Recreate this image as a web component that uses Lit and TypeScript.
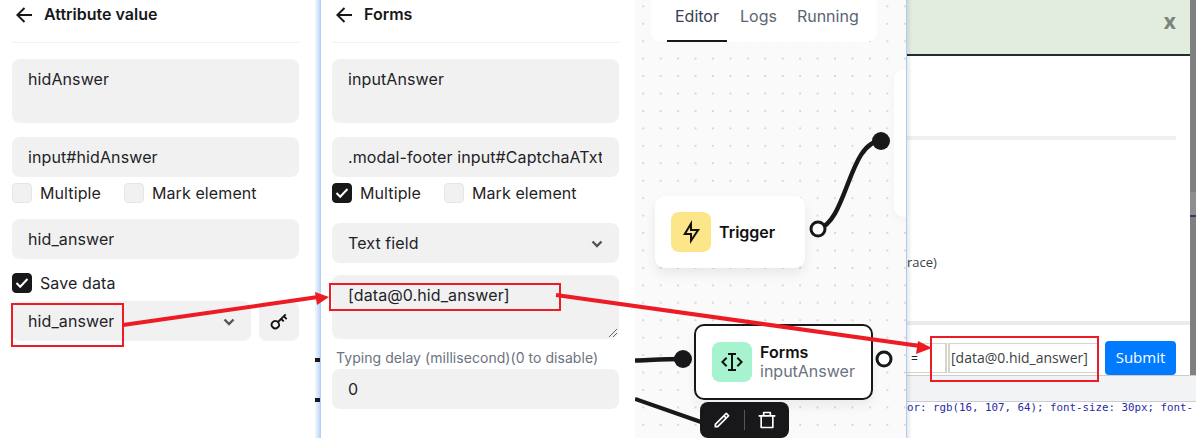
import { LitElement, html, css, svg } from 'lit';
import { customElement } from 'lit/decorators.js';

const ICONS = {
	back: 'M7.828 11H20v2H7.828l5.364 5.364-1.414 1.414L4 12l7.778-7.778 1.414 1.414z',
	key: 'M10.758 11.828l7.849-7.849 1.414 1.414-1.414 1.415 2.474 2.474-1.414 1.415-2.475-2.475-1.414 1.414 2.121 2.121-1.414 1.415-2.121-2.122-2.192 2.192a5.002 5.002 0 0 1-7.708 6.294 5 5 0 0 1 6.294-7.708zm-.637 6.293A3 3 0 1 0 5.88 13.88a3 3 0 0 0 4.242 4.242z',
	bolt: 'M13 9h8L11 24v-9H4l9-15v9zm-2 2V7.22L7.532 13H13v4.394L17.263 11H11z',
	cursor: 'M8 21v-2h3V5H8V3h8v2h-3v14h3v2H8zM18.05 7.05L23 12l-4.95 4.95-1.414-1.414L20.172 12l-3.536-3.536L18.05 7.05zm-12.1 0l1.414 1.414L3.828 12l3.536 3.536L5.95 16.95 1 12l4.95-4.95z',
	pencil: 'M15.728 9.686l-1.414-1.414L5 17.586V19h1.414l9.314-9.314zm1.414-1.414l1.414-1.414-1.414-1.414-1.414 1.414 1.414 1.414zM7.242 21H3v-4.243L16.435 3.322a1 1 0 0 1 1.414 0l2.829 2.829a1 1 0 0 1 0 1.414L7.243 21z',
	trash: 'M7 6V3a1 1 0 0 1 1-1h8a1 1 0 0 1 1 1v3h5v2h-2v13a1 1 0 0 1-1 1H5a1 1 0 0 1-1-1V8H2V6h5zm2-2v2h6V4H9zM6 8v12h12V8H6z',
};

const icon = (d: string, size = 24, color = 'currentColor') => html`
	<svg width=${size} height=${size} viewBox="0 0 24 24" fill=${color} fill-rule="evenodd"><path d=${d}></path></svg>
`;

@customElement('app-root')
export class AppRoot extends LitElement {
	static styles = css`
		:host {
			display: block;
			position: relative;
			width: 1196px;
			height: 438px;
			overflow: hidden;
			background: #fff;
			font-family: Inter, 'Liberation Sans', sans-serif;
			color: #1f2328;
		}

		.row {
			display: flex;
			height: 438px;
		}

		/* side panels */
		.panel {
			flex: none;
			box-sizing: border-box;
			padding-left: 12px;
			background: #fff;
			display: flex;
			flex-direction: column;
		}
		.panel.first {
			width: 315px;
		}
		.panel.second {
			width: 314px;
			padding-left: 11px;
		}
		.body {
			width: 287px;
			display: flex;
			flex-direction: column;
		}
		.head {
			height: 43px;
			box-sizing: border-box;
			border-bottom: 1px solid #f1f1f1;
			display: flex;
			align-items: flex-start;
			gap: 8px;
			padding-top: 2px;
			font-size: 16px;
			font-weight: 600;
			line-height: 24px;
			color: #17181a;
		}
		.head svg {
			flex: none;
			margin-top: 1px;
		}

		.field {
			box-sizing: border-box;
			height: 40px;
			padding: 1px 16px 0;
			background: #f1f1f1;
			border-radius: 8px;
			font-size: 16px;
			letter-spacing: 0.1px;
			line-height: 39px;
			white-space: nowrap;
			display: flex;
			align-items: center;
			justify-content: space-between;
		}
		.field > span {
			min-width: 0;
			overflow: hidden;
		}
		.field > span.clip {
			width: 254px;
			flex: none;
		}
		.area {
			position: relative;
			height: 64px;
			align-items: flex-start;
			line-height: 38px;
		}
		.grip {
			position: absolute;
			right: 1px;
			bottom: 1px;
		}
		.checks {
			display: flex;
			align-items: center;
			gap: 23px;
			height: 20px;
			font-size: 16px;
			letter-spacing: 0.1px;
		}
		.check {
			display: flex;
			align-items: center;
			gap: 8px;
		}
		.box {
			box-sizing: border-box;
			width: 20px;
			height: 20px;
			border-radius: 4px;
			background: #f1f1f1;
			border: 1px solid #e6e6e6;
		}
		.box.on {
			background: #18181b;
			border-color: #18181b;
			display: flex;
			align-items: center;
			justify-content: center;
		}
		.split {
			display: flex;
			gap: 8px;
		}
		.split .field:first-child {
			width: 239px;
		}
		.key {
			width: 40px;
			height: 40px;
			background: #f1f1f1;
			border-radius: 8px;
			display: flex;
			align-items: center;
			justify-content: center;
			color: #111;
		}
		.caption {
			margin: 11px 0 3px 4px;
			font-size: 14px;
			letter-spacing: 0.05px;
			line-height: 16px;
			color: #6b7280;
			white-space: nowrap;
		}
		.mt14 {
			margin-top: 14px;
		}
		.mt16 {
			margin-top: 16px;
		}
		.mt20 {
			margin-top: 20px;
		}
		.mt6 {
			margin-top: 6px;
		}
		.mt8 {
			margin-top: 8px;
		}
		.mt12 {
			margin-top: 12px;
		}

		.gutter {
			position: relative;
			flex: none;
			width: 6px;
			background: linear-gradient(90deg, #f3f6fb 0%, #dbe8fa 45%, #a9cdf8 100%);
		}
		.stub {
			position: absolute;
			left: 0;
			width: 5px;
			background: #18181b;
		}

		/* flow canvas */
		.canvas {
			position: relative;
			flex: none;
			width: 272px;
			height: 438px;
			overflow: hidden;
			background-color: #fafafa;
			background-image: radial-gradient(circle, #d8d8d8 1px, transparent 1.3px);
			background-size: 17.45px 17.45px;
			background-position: -0.5px -2.4px;
		}
		.wires {
			position: absolute;
			inset: 0;
		}
		.tabs {
			position: absolute;
			left: 16px;
			top: 0;
			width: 226px;
			height: 42px;
			box-sizing: border-box;
			padding-left: 16px;
			background: #fff;
			border-radius: 0 0 10px 10px;
			display: flex;
			font-size: 16px;
			color: #5b6472;
		}
		.tab {
			height: 42px;
			box-sizing: border-box;
			padding: 4px 8px 0;
			margin-right: 4px;
			line-height: 24px;
		}
		.tab.active {
			color: #374151;
			margin-right: 5px;
			border-bottom: 2px solid #18181b;
		}
		.node {
			position: absolute;
			box-sizing: border-box;
			background: #fff;
			border-radius: 10px;
			display: flex;
			align-items: center;
			gap: 8px;
			color: #111;
		}
		.node.trigger {
			left: 20px;
			top: 196px;
			width: 150px;
			height: 72px;
			padding-left: 16px;
			box-shadow: 0 6px 12px rgba(0, 0, 0, 0.07);
			font-size: 16px;
			font-weight: 600;
		}
		.node.forms {
			left: 59px;
			top: 324px;
			width: 179px;
			height: 76px;
			padding-left: 16px;
			border: 2px solid #18181b;
			box-shadow: 0 6px 12px rgba(0, 0, 0, 0.06);
		}
		.node.stub-card {
			left: 259px;
			top: 70px;
			width: 30px;
			height: 147px;
			box-shadow: 0 4px 10px rgba(0, 0, 0, 0.04);
		}
		.tile {
			flex: none;
			width: 40px;
			height: 40px;
			border-radius: 8px;
			display: flex;
			align-items: center;
			justify-content: center;
		}
		.tile.yellow {
			background: #fde68a;
		}
		.tile.green {
			background: #a7f3d0;
		}
		.names {
			display: flex;
			flex-direction: column;
			font-size: 16px;
			line-height: 19px;
		}
		.names b {
			font-weight: 600;
		}
		.names span {
			color: #6b7280;
		}
		.tools {
			position: absolute;
			left: 65px;
			top: 402px;
			width: 89px;
			height: 36px;
			box-sizing: border-box;
			background: #18181b;
			border-radius: 8px;
			display: flex;
			align-items: center;
			color: #fff;
			padding-left: 12px;
		}
		.tools i {
			width: 1px;
			height: 20px;
			margin: 0 12px;
			background: #55565a;
		}

		/* captured page on the right */
		.page {
			position: relative;
			flex: none;
			height: 438px;
			box-sizing: border-box;
			border-left: 1px solid #a9cdf8;
			margin-left: -1px;
			width: 290px;
			display: flex;
			flex-direction: column;
			font-family: 'Open Sans', 'Liberation Sans', sans-serif;
		}
		.page::before {
			content: '';
			position: absolute;
			left: 0;
			top: 0;
			bottom: 0;
			width: 5px;
			background: linear-gradient(90deg, rgba(0, 0, 0, 0.09), transparent);
		}
		.window {
			flex: none;
			height: 375px;
			display: flex;
		}
		.modal {
			flex: 1;
			display: flex;
			flex-direction: column;
			background: #fff;
		}
		.strip {
			flex: none;
			width: 6px;
			background: linear-gradient(#808080 192px, #8e8e8e 192px, #8e8e8e 215px, #3a3a5c 215px, #3a3a5c 217px, #808080 217px);
		}
		.modal-head {
			height: 56px;
			box-sizing: border-box;
			background: #e2eddf;
			border-bottom: 2px solid #1f2d2d;
			display: flex;
			justify-content: flex-end;
			padding: 7px 14px 0 0;
			font-size: 21px;
			font-weight: 700;
			line-height: 28px;
			color: #7c857b;
		}
		.rule {
			margin: 80px 14px 0 0;
			height: 4px;
			background: #f0f0f0;
		}
		.race {
			margin-top: 112px;
			font-size: 13px;
			line-height: 20px;
			color: #3a3f44;
		}
		.foot {
			margin-top: 49px;
			flex: 1;
			border-top: 4px solid #e9ecef;
			display: flex;
			align-items: flex-end;
			font-size: 14px;
		}
		.eq {
			box-sizing: border-box;
			width: 40px;
			height: 30px;
			margin-bottom: 2px;
			padding-left: 4px;
			border: 2px solid #d6d6c8;
			border-width: 1px 2px 1px 0;
			line-height: 30px;
			font-size: 12px;
		}
		.answer {
			box-sizing: border-box;
			width: 150px;
			height: 30px;
			margin: 0 7px 2px 1px;
			padding-left: 1px;
			border: 2px solid #d6d6c8;
			border-width: 1px 0 1px 2px;
			line-height: 27px;
			font-size: 14px;
			white-space: nowrap;
			color: #3a3f44;
		}
		.submit {
			width: 71px;
			height: 34px;
			background: #007bff;
			border-radius: 4px;
			color: #fff;
			font-size: 15px;
			font-weight: 500;
			line-height: 33px;
			text-align: center;
		}
		.devbar {
			flex: none;
			height: 27px;
			background: #f1f3f4;
			border-top: 1px solid #c9ccd0;
			border-bottom: 1px solid #c9ccd0;
			box-sizing: border-box;
		}
		.code {
			font-family: 'DejaVu Sans Mono', 'Liberation Mono', monospace;
			font-size: 10.8px;
			line-height: 12px;
			color: #2a2aa8;
			white-space: nowrap;
		}

		.marks {
			position: absolute;
			inset: 0;
			pointer-events: none;
		}
	`;

	private chevron() {
		return html`<svg width="12" height="8" viewBox="0 0 12 8" fill="none" stroke="#555" stroke-width="2.4"><path d="M1.5 1.5 6 6l4.5-4.5"></path></svg>`;
	}

	private tick() {
		return html`<svg width="14" height="12" viewBox="0 0 14 12" fill="none" stroke="#fff" stroke-width="2"><path d="M1.5 6 5.2 9.8 12.5 2"></path></svg>`;
	}

	private check(label: string, on = false) {
		return html`
			<div class="check">
				<div class="box ${on ? 'on' : ''}">${on ? this.tick() : ''}</div>
				<span>${label}</span>
			</div>
		`;
	}

	private attributePanel() {
		return html`
			<div class="panel first">
				<div class="body">
					<div class="head">${icon(ICONS.back)}<span>Attribute value</span></div>
					<div class="field area mt16"><span>hidAnswer</span></div>
					<div class="field mt14"><span>input#hidAnswer</span></div>
					<div class="checks mt6">${this.check('Multiple')}${this.check('Mark element')}</div>
					<div class="field mt16"><span>hid_answer</span></div>
					<div class="checks mt14">${this.check('Save data', true)}</div>
					<div class="split mt8">
						<div class="field"><span>hid_answer</span>${this.chevron()}</div>
						<div class="key">${icon(ICONS.key, 22)}</div>
					</div>
				</div>
			</div>
		`;
	}

	private formsPanel() {
		return html`
			<div class="panel second">
				<div class="body">
					<div class="head">${icon(ICONS.back)}<span>Forms</span></div>
					<div class="field area mt16"><span>inputAnswer</span></div>
					<div class="field mt14"><span class="clip">.modal-footer input#CaptchaATxt</span></div>
					<div class="checks mt6">${this.check('Multiple', true)}${this.check('Mark element')}</div>
					<div class="field mt20"><span>Text field</span>${this.chevron()}</div>
					<div class="field area mt12">
						<span>[data@0.hid_answer]</span>
						<svg class="grip" width="10" height="10" viewBox="0 0 10 10" stroke="#666" fill="none"><path d="M1 9 9 1M5 9l4-4"></path></svg>
					</div>
					<div class="caption">Typing delay (millisecond)(0 to disable)</div>
					<div class="field"><span>0</span></div>
				</div>
			</div>
		`;
	}

	private canvas() {
		return html`
			<div class="canvas">
				<div class="node stub-card"></div>
				<svg class="wires" width="272" height="438" fill="none" stroke="#18181b">
					${svg`
						<path d="M183 229C212 222 214 141 246 141" stroke-width="4.5"></path>
						<path d="M0 360.5C15 360 30 359 48 359" stroke-width="4.5"></path>
						<path d="M0 399 66 422" stroke-width="4"></path>
						<circle cx="246" cy="141" r="9" fill="#18181b" stroke="none"></circle>
						<circle cx="48" cy="359" r="9" fill="#18181b" stroke="none"></circle>
						<circle cx="183" cy="229" r="7" fill="#fff" stroke-width="3"></circle>
						<circle cx="249" cy="359" r="7" fill="#fff" stroke-width="3"></circle>
					`}
				</svg>
				<div class="tabs">
					<div class="tab active">Editor</div>
					<div class="tab">Logs</div>
					<div class="tab">Running</div>
				</div>
				<div class="node trigger">
					<div class="tile yellow">${icon(ICONS.bolt)}</div>
					<span>Trigger</span>
				</div>
				<div class="node forms">
					<div class="tile green">${icon(ICONS.cursor)}</div>
					<div class="names"><b>Forms</b><span>inputAnswer</span></div>
				</div>
				<div class="tools">
					${icon(ICONS.pencil, 20)}
					<i></i>
					${icon(ICONS.trash, 20)}
				</div>
			</div>
		`;
	}

	private page() {
		return html`
			<div class="page">
				<div class="window">
					<div class="modal">
						<div class="modal-head">x</div>
						<div class="rule"></div>
						<div class="race">race)</div>
						<div class="foot">
							<div class="eq">=</div>
							<div class="answer">[data@0.hid_answer]</div>
							<div class="submit">Submit</div>
						</div>
					</div>
					<div class="strip"></div>
				</div>
				<div class="devbar"></div>
				<div class="code">or: rgb(16, 107, 64); font-size: 30px; font-</div>
			</div>
		`;
	}

	render() {
		return html`
			<div class="row">
				${this.attributePanel()}
				<div class="gutter">
					<div class="stub" style="top: 358px; height: 4px"></div>
					<div class="stub" style="top: 398px; height: 4px"></div>
				</div>
				${this.formsPanel()}
				${this.canvas()}
				${this.page()}
			</div>
			<svg class="marks" width="1196" height="438" fill="none" stroke="#ed1c24">
				${svg`
					<rect x="12" y="304" width="111" height="42" stroke-width="2"></rect>
					<rect x="330" y="284" width="230" height="26" stroke-width="2"></rect>
					<rect x="931" y="337" width="167" height="44" stroke-width="2"></rect>
					<path d="M123 325 318 297" stroke-width="4"></path>
					<path d="M329 297 315 292 317 305z" fill="#ed1c24" stroke="none"></path>
					<path d="M556 295 920 346" stroke-width="4"></path>
					<path d="M932 348 918 341 916 354z" fill="#ed1c24" stroke="none"></path>
				`}
			</svg>
		`;
	}
}

declare global {
	interface HTMLElementTagNameMap {
		'app-root': AppRoot;
	}
}
